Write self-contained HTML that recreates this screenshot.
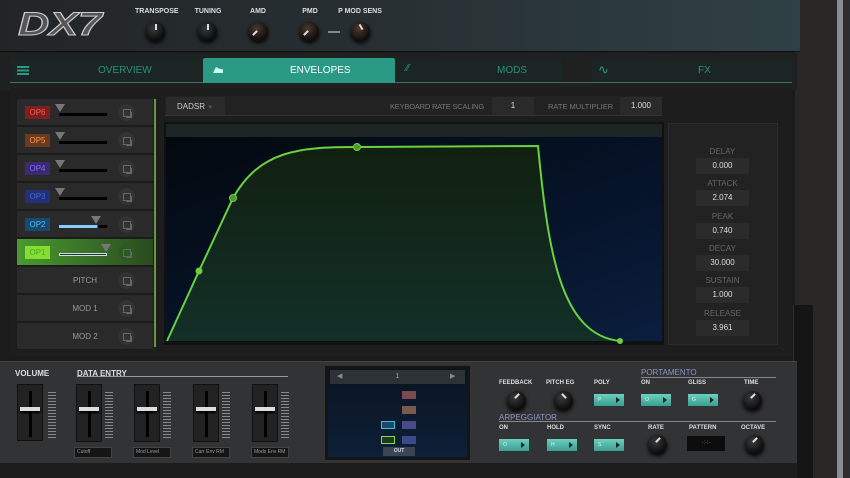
<!DOCTYPE html>
<html><head><meta charset="utf-8">
<style>
*{margin:0;padding:0;box-sizing:border-box}
body{width:850px;height:478px;overflow:hidden;background:#1b1b1b;font-family:"Liberation Sans",sans-serif;position:relative}
.a{position:absolute}
.t{color:#ddd;font-size:7px;font-weight:bold;text-align:center}
.knob{position:absolute;width:19px;height:19px;border-radius:50%;background:radial-gradient(circle at 40% 35%,#3a3a3a,#0c0c0c 70%);box-shadow:0 2px 4px #000}
.knob i{position:absolute;left:8.5px;top:2px;width:2px;height:6px;background:#ddd}
.op{position:absolute;left:17px;width:136px;height:27px;background:#2a2a2a;border-bottom:1px solid #1a1a1a}
.lab{position:absolute;left:8px;top:7px;width:25px;height:13px;font-size:8px;text-align:center;line-height:13px}
.bar{position:absolute;left:42px;top:14px;width:48px;height:3px;background:#000}
.tri{position:absolute;top:5px;width:0;height:0;border-left:5px solid transparent;border-right:5px solid transparent;border-top:8px solid #777}
.cp{position:absolute;left:101px;top:5px;width:17px;height:17px;border-radius:50%;background:#333}
.cp:after{content:"";position:absolute;left:5px;top:5px;width:6px;height:6px;border:1px solid #666;box-shadow:2px 2px 0 -1px #666}
.pl{position:absolute;left:0;width:136px;text-align:center;font-size:8px;color:#999;top:9px}
.pv{position:absolute;left:696px;width:53px;height:16px;background:#2b2b2b;color:#ddd;font-size:8px;text-align:center;line-height:16px}
.pn{position:absolute;left:680px;width:85px;color:#666;font-size:8px;text-align:center}
.fd{position:absolute;width:26px;height:58px;background:#222;border:1px solid #111}
.fd:before{content:"";position:absolute;left:11px;top:6px;width:3px;height:46px;background:#000}
.fd:after{content:"";position:absolute;left:2px;top:22px;width:20px;height:4px;background:#ddd;box-shadow:0 2px 2px #000}
.sc{position:absolute;width:8px;height:46px;background:repeating-linear-gradient(#888 0 1px,transparent 1px 3px)}
.lb{position:absolute;top:447px;height:11px;background:#151515;border:1px solid #444;color:#999;font-size:5px;padding-left:2px;line-height:9px;white-space:nowrap;overflow:hidden}
.btn{position:absolute;width:30px;height:12px;background:linear-gradient(#6cd0c0,#3a9e90);font-size:5px;color:#eee;padding-left:4px;line-height:12px}
.btn:after{content:"";position:absolute;right:4px;top:3px;border-left:4px solid #222;border-top:3px solid transparent;border-bottom:3px solid transparent}
.bl{position:absolute;color:#ddd;font-size:7px;font-weight:bold}
</style></head><body>
<div class="a" style="left:795px;top:0;width:42px;height:478px;background:#2a2826"></div>
<div class="a" style="left:837px;top:0;width:6px;height:478px;background:#8a8d92"></div>
<div class="a" style="left:843px;top:0;width:7px;height:478px;background:#2c2e30"></div>
<div class="a" style="left:0;top:0;width:800px;height:52px;background:linear-gradient(90deg,#222527,#283033 50%,#2f4146);border-bottom:1px solid #111"></div>
<div class="a" style="left:18px;top:6px;font-size:32px;font-weight:bold;font-style:italic;color:#555;letter-spacing:0px;-webkit-text-stroke:1px #ccc;transform:scaleX(1.35);transform-origin:left">DX7</div>
<div class="a t" style="left:135px;top:8px;width:40px">TRANSPOSE</div><div class="knob" style="left:146px;top:22px"><i></i></div>
<div class="a t" style="left:188px;top:8px;width:40px">TUNING</div><div class="knob" style="left:198px;top:22px"><i></i></div>
<div class="a t" style="left:238px;top:8px;width:40px">AMD</div><div class="knob" style="left:249px;top:22px;background:radial-gradient(circle at 40% 35%,#4a3a30,#120c0a 70%)"><i style="transform:rotate(-135deg);top:8px;left:5px"></i></div>
<div class="a t" style="left:290px;top:8px;width:40px">PMD</div><div class="knob" style="left:300px;top:22px;background:radial-gradient(circle at 40% 35%,#4a3a30,#120c0a 70%)"><i style="transform:rotate(-135deg);top:8px;left:5px"></i></div>
<div class="a" style="left:328px;top:31px;width:12px;height:2px;background:#888"></div>
<div class="a t" style="left:338px;top:8px;width:44px">P MOD SENS</div><div class="knob" style="left:351px;top:22px;background:radial-gradient(circle at 40% 35%,#4a3a30,#120c0a 70%)"><i style="transform:rotate(-30deg)"></i></div>
<div class="a" style="left:0;top:53px;width:797px;height:37px;background:#1f2121"></div>
<div class="a" style="left:10px;top:58px;width:352px;height:24px;background:#1b2524"></div>
<div class="a" style="left:395px;top:58px;width:167px;height:24px;background:#1b2524"></div>
<div class="a" style="left:592px;top:58px;width:200px;height:24px;background:#1b2524"></div>
<div class="a" style="left:10px;top:82px;width:782px;height:1px;background:#3d6d64"></div>
<div class="a" style="left:203px;top:58px;width:192px;height:25px;background:#2a9a85;border-radius:2px 2px 0 0"></div>
<div class="a" style="left:17px;top:66px;width:12px;height:9px;background:repeating-linear-gradient(#2a9a85 0 2px,transparent 2px 3.5px)"></div>
<div class="a" style="left:98px;top:65px;font-size:10px;color:#2a9080">OVERVIEW</div>
<div class="a" style="left:213px;top:67px;width:10px;height:6px;background:#cfe;clip-path:polygon(0 100%,30% 0,60% 30%,100% 40%,100% 100%)"></div>
<div class="a" style="left:290px;top:65px;font-size:10px;color:#fff">ENVELOPES</div>
<div class="a" style="left:406px;top:63px;font-size:10px;color:#2a9a85">⁄⁄</div>
<div class="a" style="left:497px;top:65px;font-size:10px;color:#2a9080">MODS</div>
<div class="a" style="left:598px;top:62px;font-size:13px;color:#2a9a85">∿</div>
<div class="a" style="left:698px;top:65px;font-size:10px;color:#2a9080">FX</div>
<div class="a" style="left:10px;top:88px;width:782px;height:268px;background:#1d1d1d"></div>
<div class="op" style="top:99px"><div class="lab" style="background:#7a2020;color:#f55">OP6</div><div class="tri" style="left:38px"></div><div class="bar"></div><div class="cp"></div></div>
<div class="op" style="top:127px"><div class="lab" style="background:#6a3a20;color:#f94">OP5</div><div class="tri" style="left:38px"></div><div class="bar"></div><div class="cp"></div></div>
<div class="op" style="top:155px"><div class="lab" style="background:#3a2a70;color:#86f">OP4</div><div class="tri" style="left:38px"></div><div class="bar"></div><div class="cp"></div></div>
<div class="op" style="top:183px"><div class="lab" style="background:#22307a;color:#46c">OP3</div><div class="tri" style="left:38px"></div><div class="bar"></div><div class="cp"></div></div>
<div class="op" style="top:211px"><div class="lab" style="background:#1a4a6a;color:#4bf">OP2</div><div class="bar" style="background:linear-gradient(90deg,#8cf 80%,#000 80%)"></div><div class="tri" style="left:74px"></div><div class="cp"></div></div>
<div class="op" style="top:239px;background:linear-gradient(90deg,#4a9a30,#2a4a20)"><div class="lab" style="background:#8d3;color:#4a2">OP1</div><div class="bar" style="background:#1a3a10;border:1px solid #cde"></div><div class="tri" style="left:84px"></div><div class="cp" style="background:#2a5a20"></div></div>
<div class="op" style="top:267px"><div class="pl">PITCH</div><div class="cp"></div></div>
<div class="op" style="top:295px"><div class="pl">MOD 1</div><div class="cp"></div></div>
<div class="op" style="top:323px"><div class="pl">MOD 2</div><div class="cp"></div></div>
<div class="a" style="left:154px;top:99px;width:2px;height:248px;background:#6a9a40"></div>
<div class="a" style="left:165px;top:96px;width:497px;height:20px;background:#222;border-bottom:1px solid #333"></div>
<div class="a" style="left:166px;top:97px;width:59px;height:18px;background:#2a2a2a;color:#ccc;font-size:8px;padding:5px 0 0 11px">DADSR <span style="color:#555;font-size:6px">▼</span></div>
<div class="a" style="left:390px;top:102px;font-size:7.5px;color:#777;letter-spacing:-0.2px">KEYBOARD RATE SCALING</div>
<div class="a" style="left:492px;top:97px;width:42px;height:18px;background:#2a2a2a;color:#ddd;font-size:8px;text-align:center;line-height:18px">1</div>
<div class="a" style="left:548px;top:102px;font-size:7.5px;color:#777">RATE MULTIPLIER</div>
<div class="a" style="left:620px;top:97px;width:42px;height:18px;background:#2a2a2a;color:#ddd;font-size:8px;text-align:center;line-height:18px">1.000</div>
<div class="a" style="left:164px;top:122px;width:500px;height:223px;background:#111"></div>
<div class="a" style="left:166px;top:124px;width:496px;height:217px;background:linear-gradient(160deg,#03080d,#06142a 60%,#0b1e3e)"></div>
<div class="a" style="left:166px;top:124px;width:496px;height:13px;background:#1c2424"></div>
<svg class="a" style="left:0;top:0" width="850" height="478">
<defs><linearGradient id="g" x1="0" y1="0" x2="0" y2="1"><stop offset="0" stop-color="#112010"/><stop offset="1" stop-color="#123028"/></linearGradient></defs>
<path d="M167 341 L199 271 L233 198 C260 150 300 147 357 147 L538 146 C548 250 560 335 620 341 Z" fill="url(#g)"/>
<path d="M167 341 L199 271 L233 198 C260 150 300 147 357 147 L538 146 C548 250 560 335 620 341" fill="none" stroke="#6ad040" stroke-width="2"/>
<circle cx="199" cy="271" r="3.5" fill="#6ad040"/><circle cx="233" cy="198" r="3.5" fill="#4a9a30" stroke="#6ad040"/><circle cx="357" cy="147" r="3.5" fill="#4a9a30" stroke="#6ad040"/><circle cx="620" cy="341" r="3" fill="#6ad040"/>
</svg>
<div class="a" style="left:668px;top:123px;width:110px;height:222px;background:#222;border:1px solid #2c2c2c"></div>
<div class="pn" style="top:147px">DELAY</div><div class="pv" style="top:158px">0.000</div>
<div class="pn" style="top:179px">ATTACK</div><div class="pv" style="top:190px">2.074</div>
<div class="pn" style="top:212px">PEAK</div><div class="pv" style="top:223px">0.740</div>
<div class="pn" style="top:244px">DECAY</div><div class="pv" style="top:255px">30.000</div>
<div class="pn" style="top:276px">SUSTAIN</div><div class="pv" style="top:287px">1.000</div>
<div class="pn" style="top:309px">RELEASE</div><div class="pv" style="top:320px">3.961</div>
<div class="a" style="left:793px;top:305px;width:20px;height:173px;background:#151515;border-left:1px solid #333"></div>
<div class="a" style="left:0;top:361px;width:797px;height:102px;background:#323335;border-top:1px solid #444"></div>
<div class="a" style="left:0;top:463px;width:797px;height:15px;background:#1d1d1e"></div>
<div class="bl" style="left:15px;top:369px;font-size:8px">VOLUME</div>
<div class="bl" style="left:77px;top:369px;font-size:8px">DATA ENTRY</div>
<div class="a" style="left:77px;top:376px;width:211px;height:1px;background:#999"></div>
<div class="fd" style="left:17px;top:384px;height:57px"></div><div class="sc" style="left:48px;top:392px"></div>
<div class="fd" style="left:76px;top:384px"></div><div class="sc" style="left:105px;top:392px"></div>
<div class="fd" style="left:134px;top:384px"></div><div class="sc" style="left:163px;top:392px"></div>
<div class="fd" style="left:193px;top:384px"></div><div class="sc" style="left:222px;top:392px"></div>
<div class="fd" style="left:252px;top:384px"></div><div class="sc" style="left:281px;top:392px"></div>
<div class="lb" style="left:74px;width:38px">Cutoff</div>
<div class="lb" style="left:133px;width:38px">Mod Level</div>
<div class="lb" style="left:192px;width:38px">Carr Env RM</div>
<div class="lb" style="left:251px;width:38px">Mods Env RM</div>
<div class="a" style="left:325px;top:366px;width:145px;height:94px;background:#151515"></div>
<div class="a" style="left:328px;top:369px;width:139px;height:88px;background:linear-gradient(#0b1420,#0c2038)"></div>
<div class="a" style="left:330px;top:370px;width:135px;height:14px;background:#2c3236;color:#aaa;font-size:7px;text-align:center;line-height:14px">1</div>
<div class="a" style="left:337px;top:372px;color:#888;font-size:7px">◀</div><div class="a" style="left:450px;top:372px;color:#888;font-size:7px">▶</div>
<div class="a" style="left:402px;top:391px;width:14px;height:8px;background:#7a4a50"></div>
<div class="a" style="left:402px;top:406px;width:14px;height:8px;background:#7a5a4a"></div>
<div class="a" style="left:402px;top:421px;width:14px;height:8px;background:#4a4a8a"></div>
<div class="a" style="left:402px;top:436px;width:14px;height:8px;background:#3a4a8a"></div>
<div class="a" style="left:381px;top:421px;width:14px;height:8px;background:#1a4a6a;border:1px solid #4bd"></div>
<div class="a" style="left:381px;top:436px;width:14px;height:8px;background:#1a3a2a;border:1px solid #8d3"></div>
<div class="a" style="left:383px;top:447px;width:32px;height:9px;background:#3a4654;color:#ddd;font-size:5px;font-weight:bold;text-align:center;line-height:9px">OUT</div>
<div class="bl" style="left:499px;top:380px;font-size:6px">FEEDBACK</div><div class="knob" style="left:507px;top:391px"><i style="transform:rotate(45deg)"></i></div>
<div class="bl" style="left:546px;top:380px;font-size:6px">PITCH EG</div><div class="knob" style="left:554px;top:391px"><i style="transform:rotate(-45deg)"></i></div>
<div class="bl" style="left:594px;top:380px;font-size:6px">POLY</div><div class="btn" style="left:594px;top:394px">P</div>
<div class="a" style="left:641px;top:368px;font-size:8px;color:#8a96c8">PORTAMENTO</div>
<div class="a" style="left:641px;top:377px;width:135px;height:1px;background:#888"></div>
<div class="bl" style="left:641px;top:380px;font-size:6px">ON</div><div class="btn" style="left:641px;top:394px">O</div>
<div class="bl" style="left:688px;top:380px;font-size:6px">GLISS</div><div class="btn" style="left:688px;top:394px">G</div>
<div class="bl" style="left:744px;top:380px;font-size:6px">TIME</div><div class="knob" style="left:743px;top:391px"><i style="transform:rotate(45deg)"></i></div>
<div class="a" style="left:499px;top:413px;font-size:8px;color:#8a96c8">ARPEGGIATOR</div>
<div class="a" style="left:499px;top:421px;width:277px;height:1px;background:#888"></div>
<div class="bl" style="left:499px;top:425px;font-size:6px">ON</div><div class="btn" style="left:499px;top:439px">O</div>
<div class="bl" style="left:547px;top:425px;font-size:6px">HOLD</div><div class="btn" style="left:547px;top:439px">H</div>
<div class="bl" style="left:594px;top:425px;font-size:6px">SYNC</div><div class="btn" style="left:594px;top:439px">S</div>
<div class="bl" style="left:648px;top:425px;font-size:6px">RATE</div><div class="knob" style="left:648px;top:435px"><i style="transform:rotate(45deg)"></i></div>
<div class="bl" style="left:689px;top:425px;font-size:6px">PATTERN</div>
<div class="a" style="left:687px;top:436px;width:38px;height:15px;background:#0c0c0c;color:#999;font-size:6px;text-align:center;line-height:15px">·:·:·</div>
<div class="bl" style="left:741px;top:425px;font-size:6px">OCTAVE</div><div class="knob" style="left:745px;top:435px"><i style="transform:rotate(45deg)"></i></div>
</body></html>
